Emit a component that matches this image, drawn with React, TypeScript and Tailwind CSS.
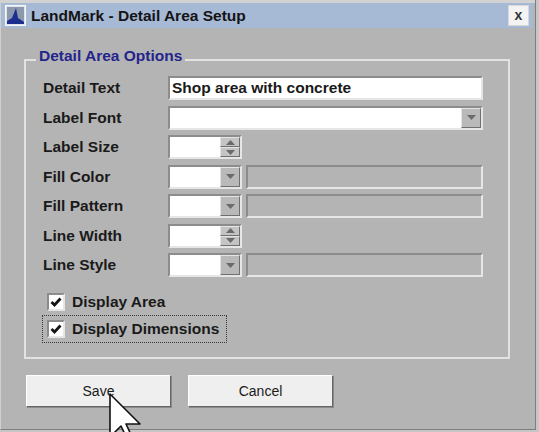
import React from 'react';

const FONT = "font-['Liberation_Sans',Arial,sans-serif]";
const SUNKEN = 'border-2 border-t-[#8c8c8c] border-l-[#8c8c8c] border-b-[#e6e6e6] border-r-[#e6e6e6]';
const RAISED = 'border border-t-[#e4e4e4] border-l-[#e4e4e4] border-b-[#6f6f6f] border-r-[#6f6f6f]';
const LABEL = 'text-[15.5px] font-bold text-[#1a1a1a] leading-none';

function Arrow({ up }: { up?: boolean }) {
  return (
    <svg width="9" height="5" viewBox="0 0 9 5" aria-hidden>
      <path d={up ? 'M0 5 L4.5 0 L9 5 Z' : 'M0 0 L9 0 L4.5 5 Z'} fill="#6a6a6a" />
    </svg>
  );
}

function DropButton() {
  return (
    <div className={`w-[20px] h-full bg-[#b9b9b9] ${RAISED} flex items-center justify-center`}>
      <Arrow />
    </div>
  );
}

function TextBox({ value }: { value: string }) {
  return (
    <div className={`w-[315px] h-[24px] bg-white ${SUNKEN} flex items-center pl-[2px] ${LABEL}`}>
      {value}
    </div>
  );
}

function WideCombo() {
  return (
    <div className={`w-[315px] h-[24px] bg-white ${SUNKEN} flex justify-end`}>
      <DropButton />
    </div>
  );
}

function Spinner() {
  return (
    <div className={`w-[74px] h-[24px] bg-white ${SUNKEN} flex justify-end`}>
      <div className="w-[20px] h-full flex flex-col">
        <div className={`flex-1 bg-[#c4c4c4] ${RAISED} flex items-center justify-center`}>
          <Arrow up />
        </div>
        <div className={`flex-1 bg-[#c4c4c4] ${RAISED} flex items-center justify-center`}>
          <Arrow />
        </div>
      </div>
    </div>
  );
}

function SmallCombo() {
  return (
    <div className="flex gap-[4px] h-[24px]">
      <div className={`w-[74px] h-full bg-white ${SUNKEN} flex justify-end`}>
        <DropButton />
      </div>
      <div className={`w-[237px] h-full bg-[#b4b4b4] ${SUNKEN}`} />
    </div>
  );
}

function Row({ label, children }: { label: string; children: React.ReactNode }) {
  return (
    <div className="flex items-center h-[24px]">
      <div className={`w-[125px] ${LABEL}`}>{label}</div>
      {children}
    </div>
  );
}

function CheckBox() {
  return (
    <div className={`w-[18px] h-[18px] bg-white ${SUNKEN} flex items-center justify-center`}>
      <svg width="12" height="10" viewBox="0 0 12 10" aria-hidden>
        <path d="M1.5 5 L4.5 8 L10.5 1.5" stroke="#141414" strokeWidth="2.8" fill="none" />
      </svg>
    </div>
  );
}

function Button({ label }: { label: string }) {
  return (
    <div className="w-[145px] h-[32px] bg-[#efefef] border border-t-white border-l-white border-b-[#666] border-r-[#666] shadow-[1px_1px_0_#8a8a8a] flex items-center justify-center text-[14px] text-[#1a1a1a]">
      {label}
    </div>
  );
}

function TitleIcon() {
  return (
    <svg width="21" height="21" viewBox="0 0 21 21" aria-hidden>
      <rect x="0.5" y="0.5" width="20" height="20" fill="#dfe4ec" stroke="#f4f6fa" />
      <rect x="2" y="2" width="17" height="17" fill="#8c98ab" />
      <path d="M2 19 L2 16 L7 13 L11 3 L13 13 L19 17 L19 19 Z" fill="#1c2f8e" />
    </svg>
  );
}

function Cursor() {
  return (
    <svg className="absolute left-[109px] top-[393px]" width="34" height="52" viewBox="0 0 34 52" aria-hidden>
      <path d="M1 1 L1 44 L12 33 L20 50 L25 48 L17 31 L31 31 Z" fill="#fff" stroke="#111" strokeWidth="1.6" strokeLinejoin="round" />
    </svg>
  );
}

export default function App() {
  return (
    <div className={`relative w-[539px] h-[432px] bg-[#c6c6c6] overflow-hidden ${FONT}`}>
      <div className="w-[536px] h-[430px] bg-[#b4b4b4] border-r border-b border-[#7e7e7e] border-l border-l-[#cfcfcf]">
        <div className="h-[3px] bg-[#d2d2d2]" />
        <div className="h-[25px] mr-[2px] bg-[#a6b9d5] flex items-center pl-[4px] pr-[4px]">
          <TitleIcon />
          <span className="ml-[5px] text-[15.5px] font-bold text-[#141414]">LandMark - Detail Area Setup</span>
          <div className="ml-auto w-[21px] h-[21px] bg-[#f3f3f3] border border-[#d8d8d8] flex items-center justify-center text-[14px] font-bold text-[#333] leading-none pb-[2px]">
            x
          </div>
        </div>

        <fieldset className="mt-[19px] ml-[23px] w-[486px] border-2 border-[#e2e2e2] pt-[3px] pb-[14px]">
          <legend className="ml-[10px] px-[3px] pb-[8px] leading-[18px] text-[15.5px] font-bold text-[#24248c]">
            Detail Area Options
          </legend>
          <div className="pl-[17px]">
            <div className="flex flex-col gap-[5.5px]">
              <Row label="Detail Text"><TextBox value="Shop area with concrete" /></Row>
              <Row label="Label Font"><WideCombo /></Row>
              <Row label="Label Size"><Spinner /></Row>
              <Row label="Fill Color"><SmallCombo /></Row>
              <Row label="Fill Pattern"><SmallCombo /></Row>
              <Row label="Line Width"><Spinner /></Row>
              <Row label="Line Style"><SmallCombo /></Row>
            </div>
            <div className="mt-[16px] h-[18px] pl-[4px] flex items-center gap-[7px]">
              <CheckBox />
              <span className={LABEL}>Display Area</span>
            </div>
            <div className="mt-[4px] -ml-[1px] w-[185px] h-[28px] border border-dotted border-[#3a3a3a] pl-[4px] flex items-center gap-[7px]">
              <CheckBox />
              <span className={LABEL}>Display Dimensions</span>
            </div>
          </div>
        </fieldset>

        <div className="mt-[16px] ml-[25px] flex gap-[17px]">
          <Button label="Save" />
          <Button label="Cancel" />
        </div>
      </div>
      <Cursor />
    </div>
  );
}
